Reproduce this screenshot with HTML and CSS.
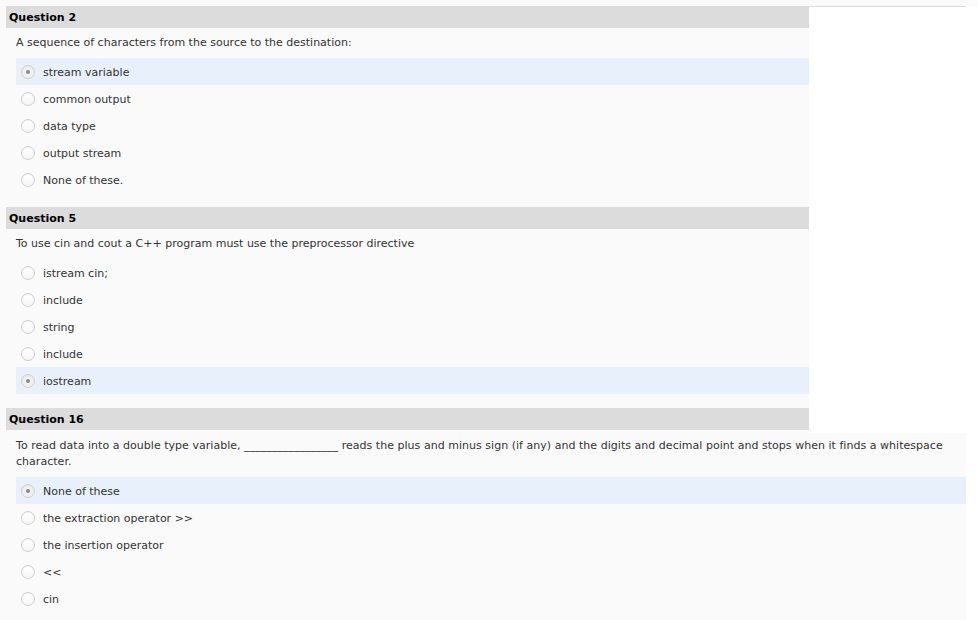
FILE: index.html
```html
<!DOCTYPE html>
<html>
<head>
<meta charset="utf-8">
<link rel="stylesheet" href="styles.css">
</head>
<body>
<div class="topbar"></div>
<div class="page">
  <div class="question">
    <div class="qhead-row">
      <div class="gutter"></div>
      <div class="qhead">Question 2</div>
      <div class="rest rest-line"></div>
    </div>
    <div class="qbody">
      <div class="qtext">A sequence of characters from the source to the destination:</div>
      <div class="opts">
        <div class="opt selected"><span class="radio"></span><span class="label">stream variable</span></div>
        <div class="opt"><span class="radio"></span><span class="label">common output</span></div>
        <div class="opt"><span class="radio"></span><span class="label">data type</span></div>
        <div class="opt"><span class="radio"></span><span class="label">output stream</span></div>
        <div class="opt"><span class="radio"></span><span class="label">None of these.</span></div>
      </div>
    </div>
  </div>
  <div class="question">
    <div class="qhead-row">
      <div class="gutter"></div>
      <div class="qhead">Question 5</div>
      <div class="rest"></div>
    </div>
    <div class="qbody">
      <div class="qtext">To use cin and cout a C++ program must use the preprocessor directive</div>
      <div class="opts">
        <div class="opt"><span class="radio"></span><span class="label">istream cin;</span></div>
        <div class="opt"><span class="radio"></span><span class="label">include</span></div>
        <div class="opt"><span class="radio"></span><span class="label">string</span></div>
        <div class="opt"><span class="radio"></span><span class="label">include</span></div>
        <div class="opt selected"><span class="radio"></span><span class="label">iostream</span></div>
      </div>
    </div>
  </div>
  <div class="question">
    <div class="qhead-row">
      <div class="gutter"></div>
      <div class="qhead">Question 16</div>
      <div class="rest"></div>
    </div>
    <div class="qbody wide">
      <div class="qtext">To read data into a double type variable, _________________ reads the plus and minus sign (if any) and the digits and decimal point and stops when it finds a whitespace character.</div>
      <div class="opts">
        <div class="opt selected"><span class="radio"></span><span class="label">None of these</span></div>
        <div class="opt"><span class="radio"></span><span class="label">the extraction operator &gt;&gt;</span></div>
        <div class="opt"><span class="radio"></span><span class="label">the insertion operator</span></div>
        <div class="opt"><span class="radio"></span><span class="label">&lt;&lt;</span></div>
        <div class="opt"><span class="radio"></span><span class="label">cin</span></div>
      </div>
    </div>
  </div>
</div>
</body>
</html>
```
FILE: styles.css
```css
html, body {
  margin: 0;
  padding: 0;
  background: #ffffff;
}
body {
  font-family: "DejaVu Sans", Verdana, sans-serif;
  font-size: 11px;
  color: #333333;
}
.topbar {
  height: 6px;
  background: #fafafa;
}
.page {
  width: 966px;
}
.qhead-row {
  display: flex;
  height: 22px;
}
.gutter {
  width: 6px;
  background: #fafafa;
}
.qhead {
  width: 800px;
  padding-left: 3px;
  background: #dcdcdc;
  color: #000000;
  font-weight: bold;
  line-height: 23px;
}
.rest {
  flex: 1;
}
.rest-line {
  border-top: 1px solid #dddddd;
}
.qbody {
  width: 809px;
  box-sizing: border-box;
  padding: 7px 0 14px 16px;
  background: #fafafa;
}
.qbody.wide {
  width: 966px;
  padding-right: 18px;
  background:
    linear-gradient(#fafafa, #fafafa) 0 0 / 809px 3px no-repeat,
    linear-gradient(#fafafa, #fafafa) 0 3px / 100% 100% no-repeat;
}
.qtext {
  line-height: 16px;
  margin-bottom: 7px;
}
.qbody.wide .qtext {
  padding-top: 1px;
  letter-spacing: 0.03px;
}
.opts {
  display: flex;
  flex-direction: column;
}
.qbody.wide .opts {
  margin-right: -18px;
}
.opt {
  display: flex;
  align-items: center;
  height: 27px;
  box-sizing: border-box;
  padding: 1px 0 0 5px;
}
.opt.selected {
  background: #e8f1fb;
}
.radio {
  width: 12px;
  height: 12px;
  margin-top: -1px;
  border-radius: 50%;
  border: 1px solid #cfcfcf;
  background: linear-gradient(#ffffff, #f6f6f6);
  box-shadow: inset 0 1px 1px rgba(0, 0, 0, 0.05);
  position: relative;
  flex: none;
}
.opt.selected .radio {
  background: #f0f0f0;
}
.opt.selected .radio::after {
  content: "";
  position: absolute;
  left: 4px;
  top: 4px;
  width: 4px;
  height: 4px;
  border-radius: 50%;
  background: #8a8a8a;
}
.label {
  margin-left: 8px;
}
```
